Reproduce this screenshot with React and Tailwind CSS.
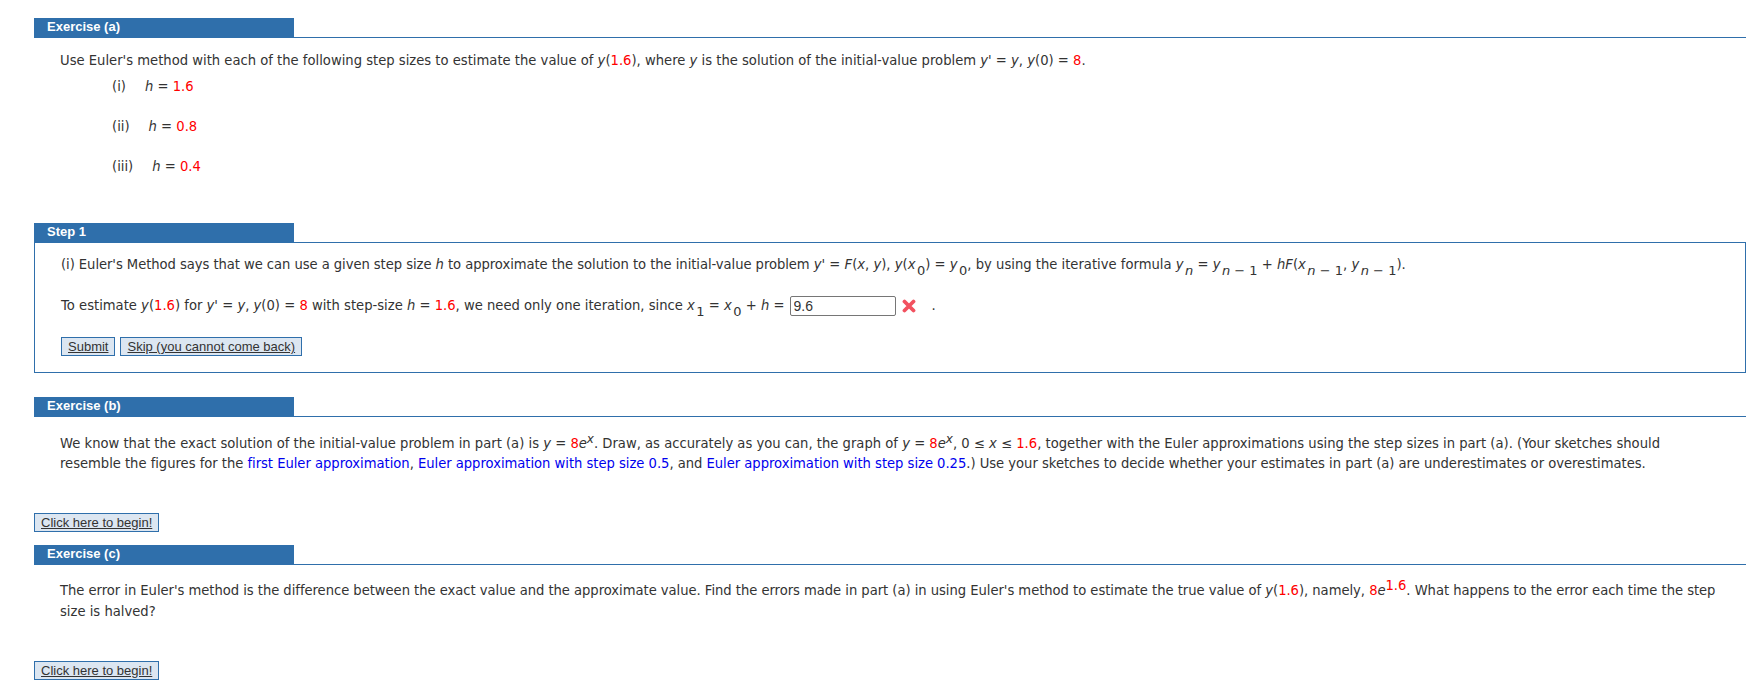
const I = ({ children }) => <i className="italic">{children}</i>;
const R = ({ children }) => <span className="text-[#ff0000]">{children}</span>;
const Sub = ({ children }) => <span className="ml-[1.5px] text-[13px] leading-[0] align-[-6px]">{children}</span>;
const Sup = ({ children, className = "text-[12px]" }) => <span className={"leading-[0] align-[5px] " + className}>{children}</span>;
const A = ({ children }) => <a href="#" className="text-[#0000ee]">{children}</a>;

function Header({ children }) {
  return (
    <div className="h-5 border-b border-[#2f6fab]">
      <div className="h-5 w-[260px] bg-[#2f6fab] pl-[13px] font-['Liberation_Sans',Arial,sans-serif] text-[13px] leading-[18px] font-bold text-white">
        {children}
      </div>
    </div>
  );
}

function Btn({ children }) {
  return (
    <button className="h-[19px] border border-[#2f6fab] bg-[#dce6f1] px-[6px] font-['Liberation_Sans',Arial,sans-serif] text-[13px] leading-[15px] text-[#333] underline">
      {children}
    </button>
  );
}

function Line({ children, className = "" }) {
  return <div className={"h-5 leading-5 whitespace-nowrap " + className}>{children}</div>;
}

function XIcon() {
  return (
    <svg width="14" height="14" viewBox="0 0 14 14" className="ml-[6px] mt-[3px] shrink-0">
      <path d="M2.5 2.5 L11.5 11.5 M11.5 2.5 L2.5 11.5" stroke="#f2515f" strokeWidth="3.8" strokeLinecap="round" />
    </svg>
  );
}

export default function App() {
  return (
    <div className="min-h-[695px] bg-white pt-[18px] pl-[34px] pr-[11px] font-['DejaVu_Sans',Verdana,sans-serif] text-[13.16px] text-[#333]">
      <Header>Exercise (a)</Header>
      <div className="pl-[26px] pt-[13px]">
        <Line>
          Use Euler's method with each of the following step sizes to estimate the value of <I>y</I>(<R>1.6</R>), where <I>y</I> is the solution of the initial-value problem <I>y'</I> = <I>y</I>, <I>y</I>(0) = <R>8</R>.
        </Line>
        <div className="flex flex-col gap-5 pl-[52px] pt-[6px]">
          <Line><span className="mr-[19px]">(i)</span><I>h</I> = <R>1.6</R></Line>
          <Line><span className="mr-[19px]">(ii)</span><I>h</I> = <R>0.8</R></Line>
          <Line><span className="mr-[19px]">(iii)</span><I>h</I> = <R>0.4</R></Line>
        </div>
      </div>

      <div className="mt-[46px]">
        <Header>Step 1</Header>
        <div className="h-[130px] border border-t-0 border-[#2f6fab] pl-[26px] pt-3">
          <Line>
            <span className="tracking-[-0.06px]">(i) Euler's Method says that we can use a given step size <I>h</I> to approximate the solution to the initial-value problem </span><I>y'</I> = <I>F</I>(<I>x</I>, <I>y</I>), <I>y</I>(<I>x</I><Sub>0</Sub>) = <I>y</I><Sub>0</Sub>, by using the iterative formula <I>y</I><Sub><I>n</I></Sub> = <I>y</I><Sub><I>n</I> − 1</Sub> + <I>hF</I>(<I>x</I><Sub><I>n</I> − 1</Sub>, <I>y</I><Sub><I>n</I> − 1</Sub>).
          </Line>
          <div className="mt-[21px] flex h-5 items-start whitespace-nowrap">
            <span className="leading-5">
              To estimate <I>y</I>(<R>1.6</R>) for <I>y'</I> = <I>y</I>, <I>y</I>(0) = <R>8</R> with step-size <I>h</I> = <R>1.6</R>, we need only one iteration, since <I>x</I><Sub>1</Sub> = <I>x</I><Sub>0</Sub> + <I>h</I> =
            </span>
            <input
              readOnly
              value="9.6"
              className="ml-[5px] h-5 w-[106px] rounded-[2px] border border-[#767676] px-[3px] font-['Liberation_Sans',Arial,sans-serif] text-[14px] text-[#333] outline-none"
            />
            <XIcon />
            <span className="ml-4 leading-5">.</span>
          </div>
          <div className="mt-[21px] flex gap-[5px]">
            <Btn>Submit</Btn>
            <Btn>Skip (you cannot come back)</Btn>
          </div>
        </div>
      </div>

      <div className="mt-[24px]">
        <Header>Exercise (b)</Header>
        <div className="pl-[26px] pt-[17px]">
          <Line>
            We know that the exact solution of the initial-value problem in part (a) is <I>y</I> = <R>8</R><I>e</I><Sup><I>x</I></Sup>. Draw, as accurately as you can, the graph of <I>y</I> = <R>8</R><I>e</I><Sup><I>x</I></Sup>, 0 ≤ <I>x</I> ≤ <R>1.6</R>, together with the Euler approximations using the step sizes in part (a). (Your sketches should
          </Line>
          <Line className="tracking-[-0.03px]">
            resemble the figures for the <A>first Euler approximation</A>, <A>Euler approximation with step size 0.5</A>, and <A>Euler approximation with step size 0.25</A>.) Use your sketches to decide whether your estimates in part (a) are underestimates or overestimates.
          </Line>
        </div>
        <div className="mt-[39px]"><Btn>Click here to begin!</Btn></div>
      </div>

      <div className="mt-3">
        <Header>Exercise (c)</Header>
        <div className="pl-[26px] pt-4">
          <Line className="tracking-[-0.04px]">
            The error in Euler's method is the difference between the exact value and the approximate value. Find the errors made in part (a) in using Euler's method to estimate the true value of <I>y</I>(<R>1.6</R>), namely, <R>8</R><I>e</I><Sup className="text-[13.16px]"><R>1.6</R></Sup>. What happens to the error each time the step
          </Line>
          <Line className="mt-px">size is halved?</Line>
        </div>
        <div className="mt-[39px]"><Btn>Click here to begin!</Btn></div>
      </div>
    </div>
  );
}
